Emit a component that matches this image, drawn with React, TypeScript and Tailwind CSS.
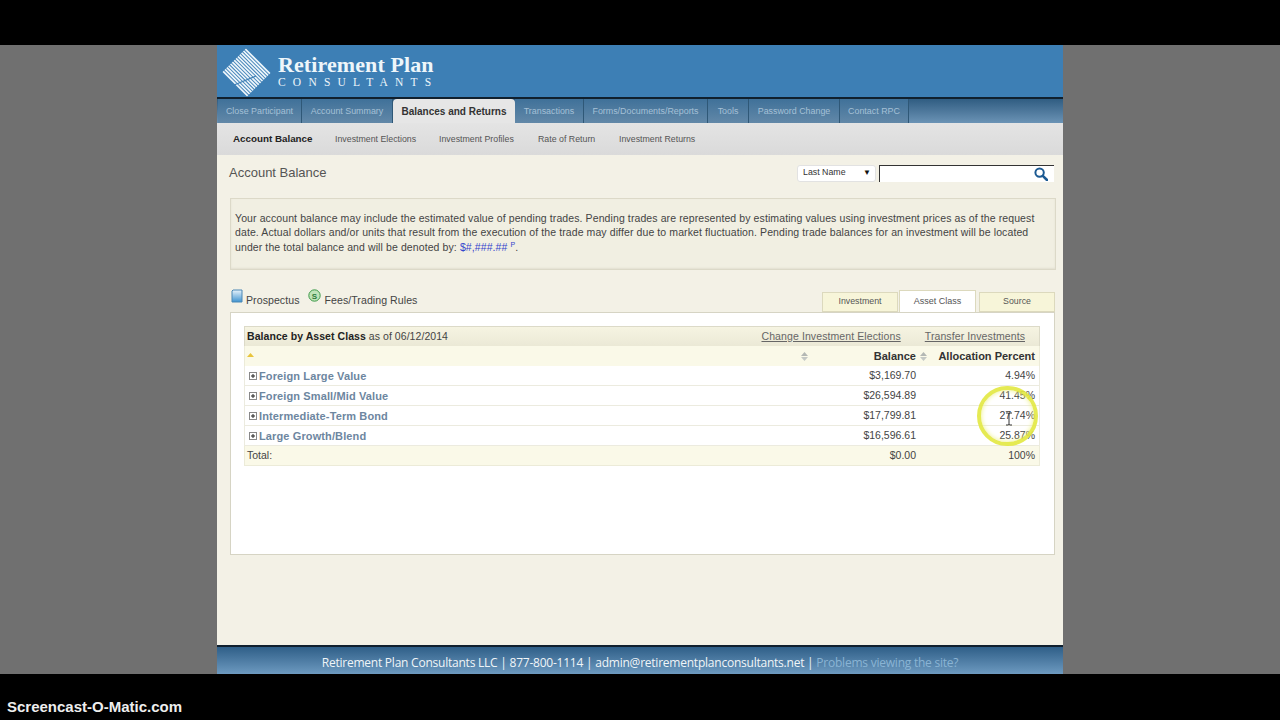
import React from "react";

const navItems = [
  { label: "Close Participant", w: "w-[84px]" },
  { label: "Account Summary", w: "w-[91px]" },
];
const navAfter = [
  { label: "Transactions", w: "w-[69px]" },
  { label: "Forms/Documents/Reports", w: "w-[124px]" },
  { label: "Tools", w: "w-[41px]" },
  { label: "Password Change", w: "w-[91px]" },
  { label: "Contact RPC", w: "w-[69px]" },
];

function Tab({ label, w }: { label: string; w: string }) {
  return (
    <div className={`${w} h-full flex items-center justify-center pt-[2px] text-[8.9px] text-[#a5c0d6] bg-gradient-to-b from-[#3f7199] to-[#6288a8] border-r border-[#2f5877] whitespace-nowrap`}>
      {label}
    </div>
  );
}

function Logo() {
  const lines = [];
  for (let i = -6; i <= 6; i++) {
    const c = i * 3.7;
    lines.push(<line key={i} x1={-5} y1={-5 + c} x2={55} y2={55 + c} stroke="#eef6fb" strokeWidth="1.7" />);
  }
  return (
    <svg width="49" height="49" viewBox="0 0 49 49" className="shrink-0">
      <defs>
        <clipPath id="dia">
          <polygon points="0,24.5 24.5,0 49,24.5 24.5,49" />
        </clipPath>
      </defs>
      <g clipPath="url(#dia)">
        {lines}
        <line x1="12" y1="37" x2="34" y2="28" stroke="#3d7fb5" strokeWidth="1.3" />
      </g>
    </svg>
  );
}

function Sort() {
  return (
    <svg width="7" height="9" viewBox="0 0 7 9">
      <path d="M3.5 0 L7 4 H0 Z" fill="#b4b8b4" />
      <path d="M3.5 9 L7 5 H0 Z" fill="#c4c8c4" />
    </svg>
  );
}

function Plus() {
  return (
    <svg width="8" height="8" viewBox="0 0 8 8" className="shrink-0 mr-[2px]">
      <rect x="0.5" y="0.5" width="7" height="7" fill="#fff" stroke="#888" />
      <path d="M2 4 H6 M4 2 V6" stroke="#222" strokeWidth="1" />
    </svg>
  );
}

const rows = [
  ["Foreign Large Value", "$3,169.70", "4.94%"],
  ["Foreign Small/Mid Value", "$26,594.89", "41.45%"],
  ["Intermediate-Term Bond", "$17,799.81", "27.74%"],
  ["Large Growth/Blend", "$16,596.61", "25.87%"],
];

export default function App() {
  return (
    <div className="w-[1280px] h-[720px] bg-black flex flex-col overflow-hidden font-['Liberation_Sans',Arial,sans-serif] relative">
      <div className="h-[45px] shrink-0" />
      <div className="h-[629px] shrink-0 bg-[#707070] flex justify-center">
        <div className="w-[846px] flex flex-col bg-[#f3f1e6]">
          {/* header */}
          <div className="h-[52px] shrink-0 bg-[#3d7fb5] flex items-center pl-[5px] gap-[7px] pt-[2px]">
            <Logo />
            <div className="flex flex-col text-[#eef6fa] -mt-[2px]">
              <div className="font-['Liberation_Serif',serif] font-bold text-[22px] leading-[22px] tracking-[0.1px] whitespace-nowrap">Retirement Plan</div>
              <div className="font-['Liberation_Serif',serif] text-[11.5px] leading-[12px] tracking-[7.2px] whitespace-nowrap">CONSULTANTS</div>
            </div>
          </div>
          {/* nav */}
          <div className="h-[26px] shrink-0 border-t-2 border-[#10202e] bg-gradient-to-b from-[#305d82] to-[#6b93b5] flex pl-px">
            {navItems.map((n) => <Tab key={n.label} {...n} />)}
            <div className="w-[122px] h-full rounded-t-[4px] bg-[#e6e6e6] flex items-center justify-center pt-[1px] text-[10px] font-bold text-[#333] whitespace-nowrap">
              Balances and Returns
            </div>
            {navAfter.map((n) => <Tab key={n.label} {...n} />)}
          </div>
          {/* subnav */}
          <div className="h-[32px] shrink-0 bg-gradient-to-b from-[#e4e4e4] to-[#dadada] flex items-center pl-[16px] pt-[1px] text-[8.8px] text-[#555] whitespace-nowrap">
            <span className="font-bold text-[9.8px] text-[#222] w-[102px]">Account Balance</span>
            <span className="w-[104px]">Investment Elections</span>
            <span className="w-[99px]">Investment Profiles</span>
            <span className="w-[81px]">Rate of Return</span>
            <span>Investment Returns</span>
          </div>
          {/* content */}
          <div className="flex-1 flex flex-col pl-[13px] pr-[8px]">
            <div className="h-[40px] shrink-0 flex items-center justify-between pr-[1px] -ml-px">
              <span className="text-[13px] text-[#555] -mt-[5px]">Account Balance</span>
              <div className="flex items-center gap-[3px] -mt-[4px]">
                <div className="w-[79px] h-[17px] bg-white rounded-[3px] border border-[#e2e2e2] flex items-center justify-between pl-[5px] pr-[4px] text-[8.8px] text-[#333]">
                  <span>Last Name</span>
                  <span className="text-[8px] text-[#111]">▼</span>
                </div>
                <div className="w-[175px] h-[17px] bg-white border-t border-l border-[#333] flex items-center justify-end pr-[6px]">
                  <svg width="14" height="14" viewBox="0 0 14 14">
                    <circle cx="5.6" cy="5.6" r="4.2" fill="none" stroke="#1c5a92" strokeWidth="2" />
                    <path d="M8.8 8.8 L13 13" stroke="#1c5a92" strokeWidth="2.6" strokeLinecap="round" />
                  </svg>
                </div>
              </div>
            </div>
            <div className="h-[72px] shrink-0 mt-[3px] -mr-px bg-[#f1efe2] border border-[#dcd9c8] shadow-[inset_0_-1px_2px_#e2dfd0] px-[4px] pt-[12px] text-[10.5px] leading-[14px] text-[#444] tracking-[0.1px] whitespace-nowrap">
              <div>Your account balance may include the estimated value of pending trades. Pending trades are represented by estimating values using investment prices as of the request</div>
              <div>date. Actual dollars and/or units that result from the execution of the trade may differ due to market fluctuation. Pending trade balances for an investment will be located</div>
              <div className="flex items-start mt-[1px]">
                <span>under the total balance and will be denoted by:&nbsp;</span>
                <span className="text-[#3344cc]">$#,###.##</span>
                <span className="text-[#3344cc] text-[7px] leading-[9px] ml-[3px]">P</span>
                <span>.</span>
              </div>
            </div>
            <div className="h-[22px] mt-[20px] shrink-0 flex items-end justify-between">
              <div className="flex items-start h-full text-[10.6px] text-[#444] ml-px tracking-[0.05px]">
                <svg width="12" height="14" viewBox="0 0 12 14" className="mr-[3px] -mt-[1px]">
                  <defs>
                    <linearGradient id="pros" x1="0" y1="0" x2="0" y2="1">
                      <stop offset="0" stopColor="#e8f3fb" />
                      <stop offset="1" stopColor="#3e93d0" />
                    </linearGradient>
                  </defs>
                  <path d="M2 1 H11 V13 H1 V2 Z" fill="url(#pros)" stroke="#4a87b5" />
                </svg>
                <span className="mr-[8px] mt-[3px]">Prospectus</span>
                <svg width="13" height="13" viewBox="0 0 13 13" className="mr-[4px] -mt-[1px]">
                  <circle cx="6.5" cy="6.5" r="5.7" fill="#bfe3b8" stroke="#3f9a4a" />
                  <text x="6.5" y="9.5" textAnchor="middle" fontSize="8" fontWeight="bold" fill="#2f7a3a">S</text>
                </svg>
                <span className="mt-[3px]">Fees/Trading Rules</span>
              </div>
              <div className="flex items-end text-[8.8px] text-[#555]">
                <div className="w-[76px] h-[20px] bg-[#f7f5d9] border border-[#dcd9bd] flex items-center justify-center">Investment</div>
                <div className="w-[77px] h-[22px] ml-px bg-white border border-b-0 border-[#dcd9bd] flex items-start pt-[4px] justify-center text-[9px]">Asset Class</div>
                <div className="w-[76px] h-[20px] ml-[3px] bg-[#f7f5d9] border border-[#dcd9bd] flex items-center justify-center">Source</div>
              </div>
            </div>
            {/* card */}
            <div className="h-[243px] shrink-0 bg-white border border-[#d6d4c4] pl-[13px] pr-[14px] pt-[13px] text-[10.5px] text-[#444]">
              <div className="h-[20px] flex items-center justify-between pl-[2px] pr-[3px] pt-px bg-gradient-to-b from-[#f6f4e2] to-[#ebe9d6] border border-[#dcdac8] border-b-0">
                <span className="tracking-[0.06px]"><b className="text-[#222]">Balance by Asset Class</b> as of 06/12/2014</span>
                <span className="flex gap-[24px] text-[#666] underline pr-[11px] tracking-[0.1px]">
                  <span>Change Investment Elections</span>
                  <span>Transfer Investments</span>
                </span>
              </div>
              <div className="h-[20px] flex items-center pt-px bg-[#faf9e8] border-x border-[#ecebd8] pl-[2px] pr-[4px] font-bold text-[#333]">
                <svg width="7" height="5" viewBox="0 0 7 5" className="-mt-[3px]"><path d="M3.5 0 L7 4 H0 Z" fill="#e8c43c" /></svg>
                <div className="flex-1 flex justify-end pr-[6px]"><Sort /></div>
                <span className="w-[113px] text-right flex items-center justify-end gap-[4px] text-[11px]">Balance <Sort /></span>
                <span className="w-[108px] text-right text-[11px]">Allocation Percent</span>
              </div>
              {rows.map((r) => (
                <div key={r[0]} className="h-[20px] flex items-center pt-px bg-white border-b border-x border-[#ecebdf] pl-[4px] pr-[4px]">
                  <Plus />
                  <span className="font-bold text-[11px] text-[#6d86a0] tracking-[0.12px] flex-1">{r[0]}</span>
                  <span className="w-[120px] text-right pr-[2px] mr-[9px]">{r[1]}</span>
                  <span className="w-[108px] text-right">{r[2]}</span>
                </div>
              ))}
              <div className="h-[20px] flex items-center pt-px bg-[#faf9e8] border-b border-x border-[#ecebd8] pl-[2px] pr-[4px]">
                <span className="flex-1">Total:</span>
                <span className="w-[120px] text-right pr-[2px] mr-[9px]">$0.00</span>
                <span className="w-[108px] text-right">100%</span>
              </div>
            </div>
          </div>
          {/* footer */}
          <div className="h-[29px] shrink-0 border-t-2 border-[#10202e] bg-gradient-to-b from-[#2f5f88] to-[#6d9ac0] flex items-center justify-center pt-[4px] text-[12px] tracking-[-0.23px] text-[#f0f5f8] font-['Open_Sans',sans-serif] whitespace-nowrap">
            Retirement Plan Consultants LLC | 877-800-1114 | admin@retirementplanconsultants.net |&nbsp;<span className="text-[#8ab4d4]">Problems viewing the site?</span>
          </div>
        </div>
      </div>
      <div className="flex-1 flex items-center pl-[7px] pt-[20px] text-[15px] font-bold text-[#eeeeee]">Screencast-O-Matic.com</div>

      {/* highlight circle and cursor */}
      <div className="absolute left-[977px] top-[386px] w-[61px] h-[60px] rounded-full border-[4px] border-[#e2e840]/90 pointer-events-none shadow-[inset_0_0_5px_#eef08a]" />
      <svg width="8" height="14" viewBox="0 0 8 14" className="absolute left-[1005px] top-[412px]">
        <path d="M1 1 H3 Q4 1 4 2 V12 Q4 13 3 13 H1 M7 1 H5 Q4 1 4 2 M4 12 Q4 13 5 13 H7" fill="none" stroke="#333" strokeWidth="1" />
      </svg>
    </div>
  );
}
